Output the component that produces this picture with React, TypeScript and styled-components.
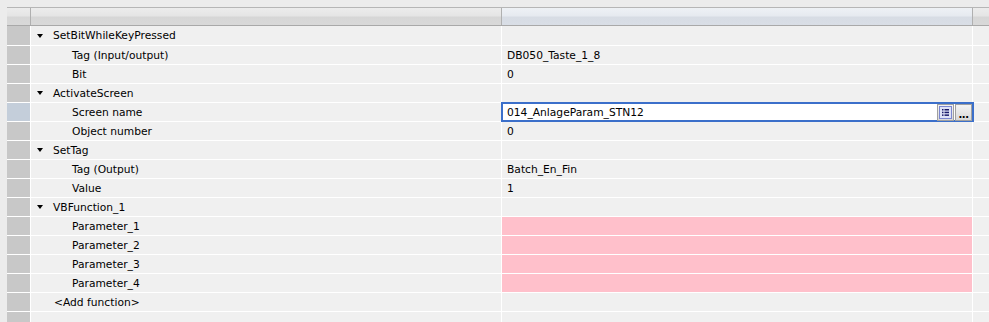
import styled, { createGlobalStyle } from "styled-components";
import { ReactElement } from "react";

const GlobalStyle = createGlobalStyle`
  html, body {
    margin: 0;
    padding: 0;
    background: #ececec;
    overflow: hidden;
  }
  body {
    font-family: "DejaVu Sans", "Liberation Sans", sans-serif;
    font-size: 10.7px;
    color: #000;
  }
`;

const Page = styled.div`
  width: 989px;
  height: 322px;
  padding: 7px 0 0 7px;
  box-sizing: border-box;
  overflow: hidden;
`;

const Header = styled.div`
  display: flex;
  height: 19px;
  box-sizing: border-box;
  border-top: 1px solid #b6b6b6;
  border-bottom: 1px solid #a9a9a9;
`;

const HeaderCell = styled.div<{ $w?: number; $blue?: boolean }>`
  ${(p) => (p.$w ? `width: ${p.$w}px;` : "flex: 1;")}
  box-sizing: border-box;
  border-right: 1px solid #b0b0b0;
  background: ${(p) =>
    p.$blue
      ? "linear-gradient(#eef1f5 0%, #e6eaf0 45%, #d7dce4 55%, #d9dee6 100%)"
      : "linear-gradient(#ececec 0%, #e5e5e5 45%, #d6d6d6 55%, #d9d9d9 100%)"};
  &:last-child {
    border-right: none;
  }
`;

const Row = styled.div<{ $h?: number }>`
  display: flex;
  height: ${(p) => p.$h ?? 19}px;
  box-sizing: border-box;
  border-bottom: 1px solid #ffffff;
  background: #f0f0f0;
`;

const Gutter = styled.div<{ $selected?: boolean }>`
  width: 24px;
  box-sizing: border-box;
  border-right: 1px solid #ffffff;
  background: ${(p) => (p.$selected ? "#c4ceda" : "#c8c8c8")};
`;

const NameCell = styled.div<{ $level: number }>`
  width: 471px;
  box-sizing: border-box;
  border-right: 1px solid #ffffff;
  display: flex;
  align-items: center;
  padding-left: ${(p) => (p.$level === 0 ? 6 : p.$level === 1 ? 23 : 41)}px;
  white-space: nowrap;
`;

const Toggle = styled.span`
  display: inline-block;
  width: 0;
  height: 0;
  border-left: 3.5px solid transparent;
  border-right: 3.5px solid transparent;
  border-top: 4px solid #000;
  margin-right: 10px;
`;

const ValueCell = styled.div<{ $pink?: boolean }>`
  width: 471px;
  box-sizing: border-box;
  border-right: 1px solid #ffffff;
  display: flex;
  align-items: center;
  padding-left: 5px;
  background: ${(p) => (p.$pink ? "#ffc0cb" : "transparent")};
  position: relative;
  white-space: nowrap;
`;

const Extra = styled.div`
  flex: 1;
`;

const Editor = styled.div`
  position: absolute;
  left: -1px;
  top: -1px;
  right: -2px;
  bottom: -1px;
  border: 2px solid #3b6fca;
  background: #fff;
  display: flex;
  align-items: center;
  padding-left: 4px;
  box-sizing: border-box;
`;

const EditorText = styled.span`
  flex: 1;
`;

const EditorButton = styled.div`
  width: 17px;
  height: 17px;
  box-sizing: border-box;
  border: 1px solid #a0a0a0;
  background: linear-gradient(#f4f4f4, #d8d8d8);
  display: flex;
  align-items: center;
  justify-content: center;
  margin-left: 1px;
`;

const DotsButton = styled(EditorButton)`
  align-items: flex-end;
  padding-bottom: 2px;
  font-weight: bold;
  font-size: 10px;
  line-height: 6px;
  letter-spacing: -0.5px;
  color: #000;
`;

type Item = {
  name: string;
  level: number;
  value?: string;
  pink?: boolean;
  editing?: boolean;
};

const items: Item[] = [
  { name: "SetBitWhileKeyPressed", level: 0 },
  { name: "Tag (Input/output)", level: 2, value: "DB050_Taste_1_8" },
  { name: "Bit", level: 2, value: "0" },
  { name: "ActivateScreen", level: 0 },
  { name: "Screen name", level: 2, value: "014_AnlageParam_STN12", editing: true },
  { name: "Object number", level: 2, value: "0" },
  { name: "SetTag", level: 0 },
  { name: "Tag (Output)", level: 2, value: "Batch_En_Fin" },
  { name: "Value", level: 2, value: "1" },
  { name: "VBFunction_1", level: 0 },
  { name: "Parameter_1", level: 2, pink: true },
  { name: "Parameter_2", level: 2, pink: true },
  { name: "Parameter_3", level: 2, pink: true },
  { name: "Parameter_4", level: 2, pink: true },
  { name: "<Add function>", level: 1 },
];

const ListIcon = (): ReactElement => (
  <svg width="13" height="13" viewBox="0 0 13 13">
    <rect x="0.5" y="0.5" width="12" height="12" fill="#dfe3f7" stroke="#7b86d0" />
    <rect x="3" y="3" width="1.5" height="1.5" fill="#1a1a6a" />
    <rect x="5.5" y="3" width="4.5" height="1.5" fill="#1a1a6a" />
    <rect x="3" y="5.7" width="1.5" height="1.5" fill="#1a1a6a" />
    <rect x="5.5" y="5.7" width="4.5" height="1.5" fill="#1a1a6a" />
    <rect x="3" y="8.4" width="1.5" height="1.5" fill="#1a1a6a" />
    <rect x="5.5" y="8.4" width="4.5" height="1.5" fill="#1a1a6a" />
  </svg>
);

export default function App(): ReactElement {
  return (
    <Page>
      <GlobalStyle />
      <Header>
        <HeaderCell $w={24} />
        <HeaderCell $w={471} />
        <HeaderCell $w={471} $blue />
        <HeaderCell />
      </Header>
      {items.map((it, i) => (
        <Row key={i} $h={i === 0 ? 20 : 19}>
          <Gutter $selected={it.editing} />
          <NameCell $level={it.level}>
            {it.level === 0 && <Toggle />}
            {it.name}
          </NameCell>
          <ValueCell $pink={it.pink}>
            {it.editing ? (
              <Editor>
                <EditorText>{it.value}</EditorText>
                <EditorButton>
                  <ListIcon />
                </EditorButton>
                <DotsButton>...</DotsButton>
              </Editor>
            ) : (
              it.value
            )}
          </ValueCell>
          <Extra />
        </Row>
      ))}
      <Row>
        <Gutter />
        <NameCell $level={2} />
        <ValueCell />
        <Extra />
      </Row>
    </Page>
  );
}
